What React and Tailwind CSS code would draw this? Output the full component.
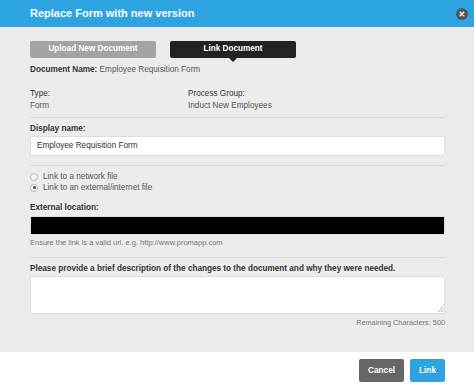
export default function App() {
  return (
    <div className="w-[474px] h-[386px] bg-white flex flex-col overflow-hidden" style={{ fontFamily: '"Liberation Sans", Arial, sans-serif' }}>
      {/* Header */}
      <div className="h-[27px] bg-[#2ea3e1] flex items-center justify-between pl-[30px] pr-[6px] shrink-0">
        <h1 className="text-white font-bold text-[11px]">Replace Form with new version</h1>
        <div className="w-[12px] h-[12px] rounded-full bg-[#555] flex items-center justify-center">
          <svg viewBox="0 0 10 10" className="w-[6px] h-[6px]">
            <path d="M2 2 L8 8 M8 2 L2 8" stroke="white" strokeWidth="2.4" strokeLinecap="round" />
          </svg>
        </div>
      </div>

      {/* Body */}
      <div className="bg-[#ececec] h-[325px] pl-[30px] pr-[29px] pt-[14px] text-[8.2px] text-[#555] shrink-0">
        <div className="flex gap-[14px]">
          <div className="w-[126px] h-[17px] bg-[#a4a4a4] rounded-[2px] text-white font-bold text-[8.2px] flex items-center justify-center">
            Upload New Document
          </div>
          <div className="relative w-[126px] h-[17px] bg-[#222] rounded-[2px] text-white font-bold text-[8.2px] flex items-center justify-center">
            Link Document
            <div className="absolute left-1/2 -translate-x-1/2 top-full w-0 h-0 border-l-[4px] border-r-[4px] border-t-[4px] border-l-transparent border-r-transparent border-t-[#222]" />
          </div>
        </div>

        <div className="mt-[5px] leading-[14px]">
          <span className="text-[#333] font-bold">Document Name:</span> Employee Requisition Form
        </div>

        <div className="mt-[11px] flex leading-[12px]">
          <div className="w-[158px]">
            <div className="text-[#333]">Type:</div>
            <div>Form</div>
          </div>
          <div>
            <div className="text-[#333]">Process Group:</div>
            <div>Induct New Employees</div>
          </div>
        </div>

        <div className="mt-[5px] border-t border-dotted border-[#ccc]" />

        <div className="mt-[4px] text-[#333] font-bold leading-[13px]">Display name:</div>
        <div className="mt-[1px] h-[20px] bg-white border border-[#ddd] rounded-[2px] flex items-center px-[6px] text-[#333]">
          Employee Requisition Form
        </div>

        <div className="mt-[9px] border-t border-dotted border-[#ccc]" />

        <div className="mt-[5px] flex flex-col leading-[11px]">
          <label className="flex items-center gap-[5px]">
            <span className="w-[8px] h-[8px] rounded-full border border-[#bbb] bg-[#f6f6f6]" />
            Link to a network file
          </label>
          <label className="flex items-center gap-[5px]">
            <span className="w-[8px] h-[8px] rounded-full border border-[#bbb] bg-[#f6f6f6] flex items-center justify-center">
              <span className="w-[3px] h-[3px] rounded-full bg-[#444]" />
            </span>
            Link to an external/internet file
          </label>
        </div>

        <div className="mt-[8px] text-[#333] font-bold leading-[14px]">External location:</div>
        <div className="mt-[1px] h-[19px] bg-black border border-[#ddd]" />
        <div className="mt-[2px] text-[7.5px] text-[#777] leading-[11px]">Ensure the link is a valid url. e.g. http://www.promapp.com</div>

        <div className="mt-[9px] border-t border-dotted border-[#ccc]" />

        <div className="mt-[6px] text-[#333] font-bold leading-[10px]">Please provide a brief description of the changes to the document and why they were needed.</div>
        <div className="mt-[2px] h-[38px] bg-white border border-[#ddd] rounded-[2px] relative">
          <svg viewBox="0 0 6 6" className="absolute right-[1px] bottom-[1px] w-[6px] h-[6px]">
            <path d="M1 6 L6 1 M4 6 L6 4" stroke="#999" strokeWidth="0.8" />
          </svg>
        </div>
        <div className="mt-[4px] text-right text-[7.3px] text-[#777]">Remaining Characters: 500</div>
      </div>

      {/* Footer */}
      <div className="flex justify-end gap-[6px] pr-[29px] pt-[7px]">
        <button className="w-[45px] h-[23px] bg-[#666] rounded-[2px] text-white font-bold text-[8.3px]">Cancel</button>
        <button className="w-[35px] h-[23px] bg-[#2ea3e1] rounded-[2px] text-white font-bold text-[8.3px]">Link</button>
      </div>
    </div>
  );
}
